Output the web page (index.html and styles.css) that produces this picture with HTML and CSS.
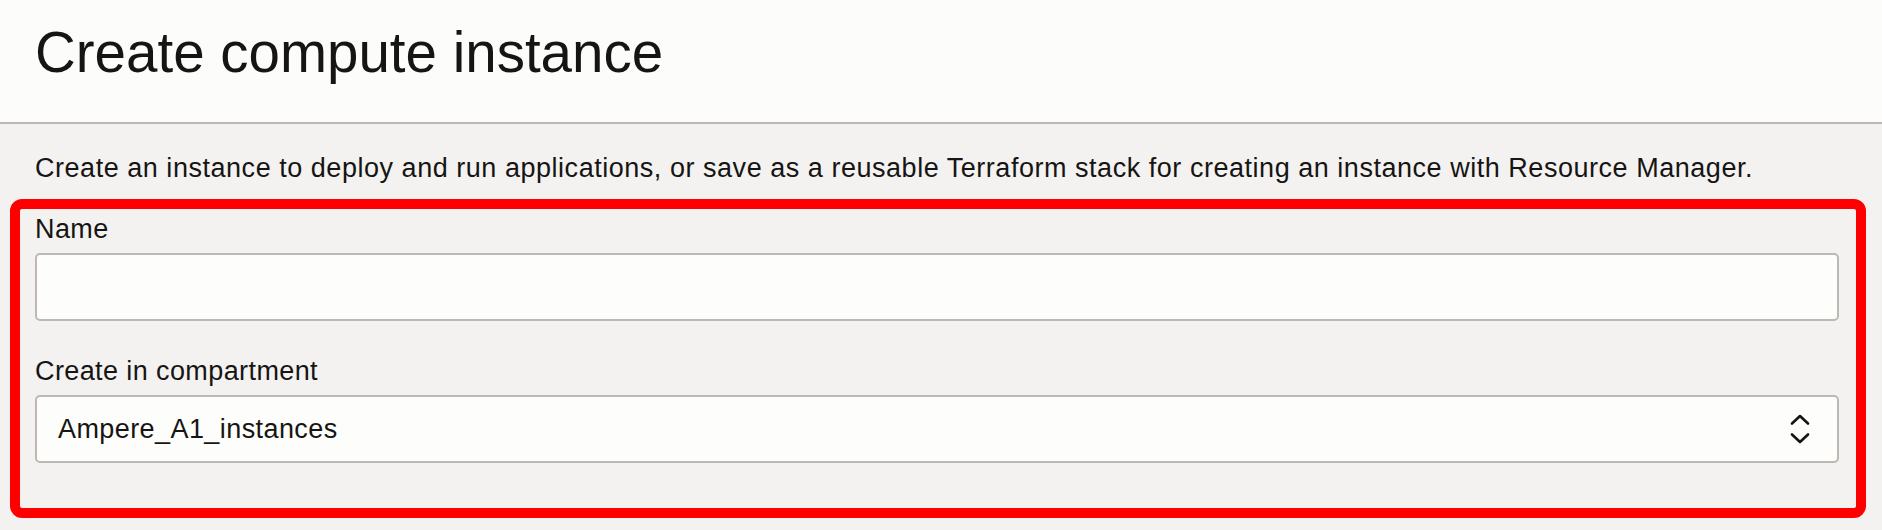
FILE: index.html
```html
<!DOCTYPE html>
<html lang="en">
<head>
<meta charset="utf-8">
<title>Create compute instance</title>
<link rel="stylesheet" href="styles.css">
</head>
<body>
<header class="page-header">
  <h1 class="page-title">Create compute instance</h1>
</header>
<main class="content">
  <p class="intro">Create an instance to deploy and run applications, or save as a reusable Terraform stack for creating an instance with Resource Manager.</p>
  <div class="field field-name">
    <label class="field-label" for="name">Name</label>
    <div class="text-input" id="name"></div>
  </div>
  <div class="field field-compartment">
    <label class="field-label">Create in compartment</label>
    <div class="select-input">
      <span class="select-value">Ampere_A1_instances</span>
      <svg class="select-chevrons" width="20" height="30" viewBox="0 0 20 30" aria-hidden="true">
        <path d="M2 9.5 L10 2 L18 9.5" fill="none" stroke="#161513" stroke-width="2.6" stroke-linecap="round" stroke-linejoin="round"/>
        <path d="M2 20.5 L10 28 L18 20.5" fill="none" stroke="#161513" stroke-width="2.6" stroke-linecap="round" stroke-linejoin="round"/>
      </svg>
    </div>
  </div>
  <div class="highlight-box"></div>
</main>
</body>
</html>
```
FILE: styles.css
```css
html, body {
  margin: 0;
  padding: 0;
}
body {
  width: 1882px;
  height: 530px;
  overflow: hidden;
  background: #f3f2f1;
  font-family: "Liberation Sans", Arial, Helvetica, sans-serif;
  color: #161513;
}
.page-header {
  box-sizing: border-box;
  height: 124px;
  background: #fcfcfb;
  border-bottom: 2px solid #bcb8b2;
  padding: 21px 35px 0;
}
.page-title {
  margin: 0;
  font-size: 56.5px;
  line-height: 64px;
  font-weight: 400;
}
.content {
  position: relative;
  padding: 28px 43px 0 35px;
}
.intro {
  margin: 0;
  font-size: 27px;
  letter-spacing: 0.53px;
  line-height: 32px;
}
.field {
  display: flex;
  flex-direction: column;
  gap: 8px;
}
.field-name {
  margin-top: 29px;
}
.field-compartment {
  margin-top: 34px;
}
.field-label {
  font-size: 27px;
  letter-spacing: 0.4px;
  line-height: 32px;
}
.text-input,
.select-input {
  box-sizing: border-box;
  height: 68px;
  background: #fdfdfc;
  border: 2px solid #bcb8b2;
  border-radius: 5px;
}
.select-input {
  display: flex;
  align-items: center;
  justify-content: space-between;
  padding: 0 27px 0 21px;
}
.select-value {
  font-size: 27px;
  letter-spacing: 0.42px;
  line-height: 32px;
}
.select-chevrons {
  display: block;
}
.highlight-box {
  position: absolute;
  left: 10px;
  top: 75px;
  width: 1856px;
  height: 319px;
  box-sizing: border-box;
  border: 10px solid #ff0000;
  border-radius: 12px;
  pointer-events: none;
}
```
